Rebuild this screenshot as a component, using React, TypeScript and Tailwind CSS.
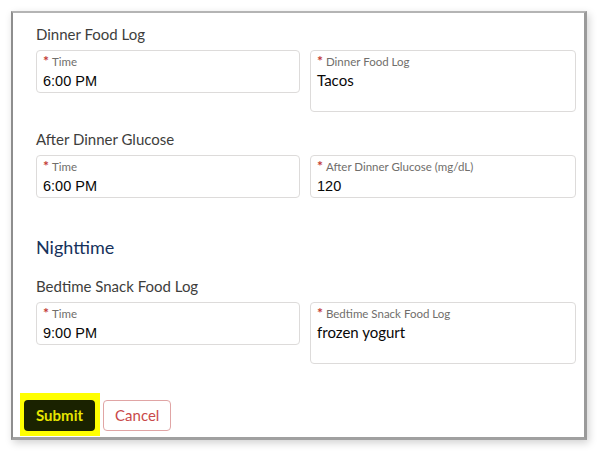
import React from "react";

const sans = { fontFamily: "Lato, 'Noto Sans', sans-serif" };

function Field({ label, value, tall, arial }: { label: string; value: string; tall?: boolean; arial?: boolean }) {
  return (
    <div
      className={`flex flex-col rounded-[4px] border border-[#dddbda] bg-white px-[6px] pt-[3px] ${tall ? "h-[62px]" : "h-[43px]"}`}
    >
      <div className="flex items-baseline text-[11.5px] leading-[14px] text-[#706e6b]">
        <span className="mr-[3px] text-[14px] font-bold leading-[14px] text-[#c23934]">*</span>
        {label}
      </div>
      <div
        className={`leading-[18px] text-[#080707] ${arial ? "mt-[3px] text-[14.5px]" : "mt-[2px] text-[15px]"}`}
        style={arial ? { fontFamily: "'Liberation Sans', Arial, sans-serif" } : undefined}
      >
        {value}
      </div>
    </div>
  );
}

export default function App() {
  return (
    <div className="h-[451px] w-[599px] bg-white pt-[11px] pl-[11px]" style={sans}>
      <div className="flex h-[429px] w-[576px] flex-col border-t-2 border-l-2 border-r-[3px] border-b-[3px] border-t-[#b4b4b4] border-l-[#8e8e8e] border-r-[#9a9a9a] border-b-[#a0a0a0] bg-white shadow-[2px_3px_8px_rgba(0,0,0,0.18)]">
        <div className="pl-[23px] pr-[8px] pt-[11px]">
          <div className="text-[15px] leading-[20px] text-[#3e3e3c]">Dinner Food Log</div>
          <div className="mt-[6px] grid grid-cols-[264px_266px] items-start gap-[10px]">
            <Field label="Time" value="6:00 PM" arial />
            <Field label="Dinner Food Log" value="Tacos" tall />
          </div>

          <div className="mt-[17px] text-[15px] leading-[20px] text-[#3e3e3c]">After Dinner Glucose</div>
          <div className="mt-[6px] grid grid-cols-[264px_266px] items-start gap-[10px]">
            <Field label="Time" value="6:00 PM" arial />
            <Field label="After Dinner Glucose (mg/dL)" value="120" arial />
          </div>

          <div className="mt-[37px] text-[18px] leading-[24px] text-[#16325c]">Nighttime</div>

          <div className="mt-[17px] text-[15px] leading-[20px] text-[#3e3e3c]">Bedtime Snack Food Log</div>
          <div className="mt-[6px] grid grid-cols-[264px_266px] items-start gap-[10px]">
            <Field label="Time" value="9:00 PM" arial />
            <Field label="Bedtime Snack Food Log" value="frozen yogurt" tall />
          </div>
        </div>

        <div className="mt-[29px] flex items-start pl-[7px]">
          <div className="bg-[#ffff00] pt-[7px] pb-[5px] pl-[4px] pr-[5px]">
            <button className="h-[31px] rounded-[4px] bg-[#1a2200] px-[12px] text-[15px] font-bold text-[#e6e600]" style={sans}>
              Submit
            </button>
          </div>
          <button
            className="ml-[3px] mt-[7px] h-[31px] rounded-[4px] border border-[#e0a5a5] bg-white px-[11px] text-[15px] text-[#c9494a]"
            style={sans}
          >
            Cancel
          </button>
        </div>
      </div>
    </div>
  );
}
